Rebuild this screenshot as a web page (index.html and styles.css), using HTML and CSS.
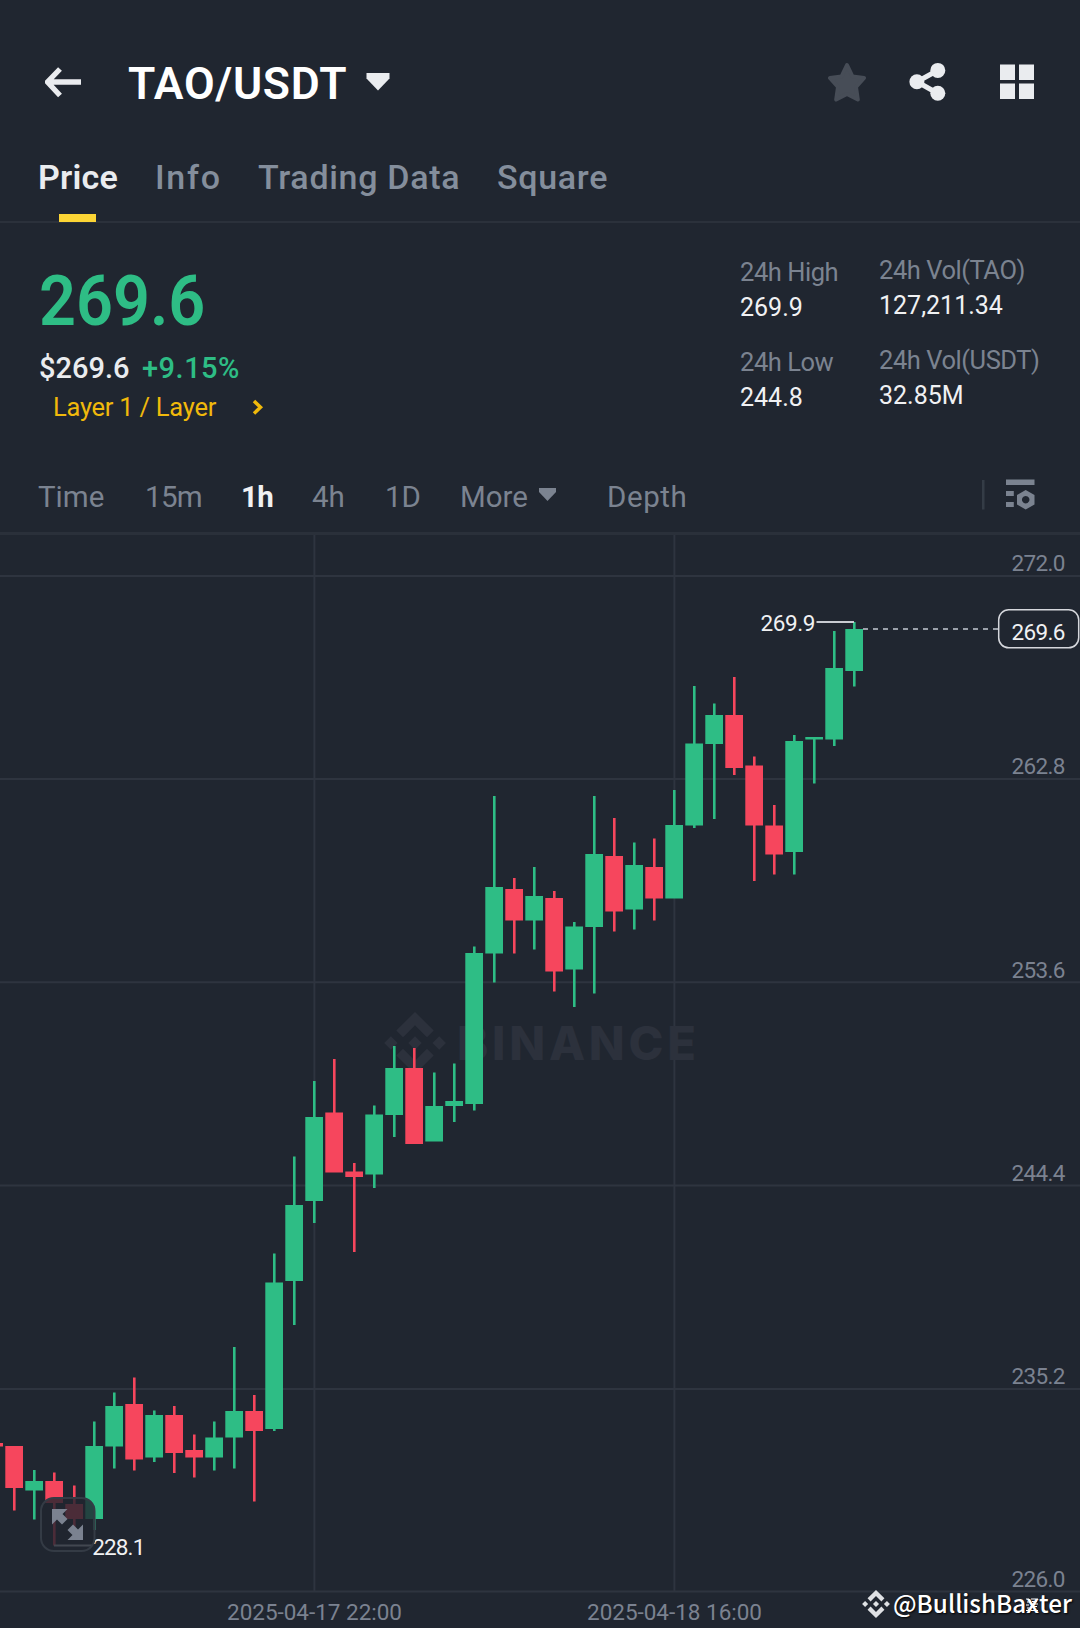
FILE: index.html
```html
<!DOCTYPE html>
<html lang="en">
<head>
<meta charset="utf-8">
<title>TAO/USDT</title>
<link rel="stylesheet" href="styles.css">
</head>
<body>
<header class="header">
  <svg class="back" width="36" height="60" viewBox="45 54 36 60"><path d="M81 82H48M60 69L47.500 82L60 95.500"/></svg>
  <h1 class="pair">TAO/USDT</h1>
  <svg class="caret" width="24" height="60" viewBox="366 54 24 60"><path d="M366.500 73H389.500V78.500L378 90.500L366.500 78.500Z"/></svg>
  <div class="actions">
    <svg class="star" width="38" height="60" viewBox="828.500 54 38 60"><path d="M847.500 65L853 76.500L864.500 78L856.500 87L858.300 99.500L847.500 94L836.700 99.500L838.500 87L830.500 78L842 76.500Z"/></svg>
    <svg class="share" width="37" height="60" viewBox="909.500 54 37 60"><path d="M938 70.500L917.500 81.800L938 93.300"/><circle cx="938.300" cy="70.400" r="7.500"/><circle cx="917.400" cy="81.800" r="7.500"/><circle cx="938.300" cy="93.300" r="7.500"/></svg>
    <svg class="grid" width="34" height="60" viewBox="1000 54 34 60"><path d="M1000 64.500h15v15.500h-15zM1019 64.500h15v15.500h-15zM1000 83.500h15v15.500h-15zM1019 83.500h15v15.500h-15z"/></svg>
  </div>
</header>
<nav class="tabs">
  <a class="tab tab-active">Price</a>
  <a class="tab tab-info">Info</a>
  <a class="tab">Trading Data</a>
  <a class="tab">Square</a>
</nav>
<section class="summary">
  <div class="quote">
    <div class="price">269.6</div>
    <div class="change"><span class="usd">$269.6</span><span class="pct">+9.15%</span></div>
    <div class="category"><span class="cat-name">Layer 1 / Layer</span><svg width="12" height="32" viewBox="253 391 12 32"><path d="M255 401L261.500 407.300L255 413.500"/></svg></div>
  </div>
  <dl class="stats">
    <dt>24h High</dt><dd>269.9</dd>
    <dt>24h Low</dt><dd>244.8</dd>
  </dl>
  <dl class="stats stats-vol">
    <dt>24h Vol(TAO)</dt><dd>127,211.34</dd>
    <dt>24h Vol(USDT)</dt><dd>32.85M</dd>
  </dl>
</section>
<nav class="frames">
  <a>Time</a>
  <a class="tight">15m</a>
  <a class="frame-active">1h</a>
  <a>4h</a>
  <a>1D</a>
  <a class="more">More<svg width="17" height="14" viewBox="0 0 17 14"><path d="M0 0H17V4L8.500 13L0 4Z"/></svg></a>
  <a class="depth">Depth</a>
  <svg class="settings" width="53" height="40" viewBox="982 475 53 40"><path class="sep" d="M982 480h2.500v29.500h-2.500z"/><path fill-rule="evenodd" d="M1006 479.500h28.500v5.500h-28.500zM1006 491h7.800v5h-7.800zM1006 502h7.800v5h-7.800zM1025.700 490L1034.500 495V504.500L1025.700 509.500L1017 504.500V495ZM1025.700 496a3.700 3.700 0 1 0 .01 0z"/></svg>
</nav>
<main class="chart">
  <svg width="1080" height="1093" viewBox="0 535 1080 1093">
    <g class="gridlines"><path d="M0 576H1080M0 779H1080M0 982.300H1080M0 1185.500H1080M0 1389H1080M0 1591.500H1080M314.400 535V1591M674.400 535V1591"/></g>
    <g class="brand">
      <path d="M396.300 1030.500L415 1012L433.700 1030.500L427 1037.200L415 1025.300L403 1037.200ZM396.300 1055.500L403 1048.800L415 1060.700L427 1048.800L433.700 1055.500L415 1074ZM384.200 1043l6.700-6.700 6.700 6.700-6.700 6.700zM408.300 1043l6.700-6.700 6.700 6.700-6.700 6.700zM432.500 1043l6.700-6.700 6.700 6.700-6.700 6.700z"/>
      <text x="457" y="1060" textLength="239">BINANCE</text>
    </g>
    <g id="candles"></g>
    <g class="scale">
      <text x="1011.500" y="571" textLength="54">272.0</text>
      <text x="1011.500" y="774" textLength="54">262.8</text>
      <text x="1011.500" y="977.500" textLength="54">253.6</text>
      <text x="1011.500" y="1181" textLength="54">244.4</text>
      <text x="1011.500" y="1384" textLength="54">235.2</text>
      <text x="1011.500" y="1586.500" textLength="54">226.0</text>
      <text x="227" y="1620" textLength="175">2025-04-17 22:00</text>
      <text x="587" y="1620" textLength="175">2025-04-18 16:00</text>
    </g>
    <path class="callout" d="M816.500 622H854M54 1545.500H92"/>
    <path class="last-line" d="M863 629H998"/>
    <rect class="tag" x="998.700" y="609.800" width="80" height="38" rx="10"/>
    <g class="values">
      <text x="760.500" y="631" textLength="55">269.9</text>
      <text x="1011.500" y="640" textLength="54">269.6</text>
      <text x="92.300" y="1555" textLength="53">228.1</text>
    </g>
    <g class="expand">
      <rect x="41" y="1498" width="53.500" height="53" rx="13"/>
      <path d="M52 1509H67.500L62.500 1514L67.500 1519L62 1524.500L57 1519.500L52 1524.500ZM83 1540H67.500L72.500 1535L67.500 1530L73 1524.500L78 1529.500L83 1524.500Z"/>
    </g>
  </svg>
  <div class="credit">
    <svg width="28" height="28" viewBox="384 1012 62 62"><path d="M396.300 1030.500L415 1012L433.700 1030.500L427 1037.200L415 1025.300L403 1037.200ZM396.300 1055.500L403 1048.800L415 1060.700L427 1048.800L433.700 1055.500L415 1074ZM384.200 1043l6.700-6.700 6.700 6.700-6.700 6.700zM408.300 1043l6.700-6.700 6.700 6.700-6.700 6.700zM432.500 1043l6.700-6.700 6.700 6.700-6.700 6.700z"/></svg>
    <span class="credit-name">@BullishBa<span class="credit-x">x<svg width="12" height="13" viewBox="0 0 12 13"><path d="M0 1H3M1 4H4M0 7H3M1 10H3M0 12.500H4M5 1H12M6 3.500H11M5 6H12M6 8.500H11M5 12.500H12M2 12L10 2"/></svg></span>ter</span>
  </div>
</main>
<script src="chart.js"></script>
</body>
</html>
```
FILE: styles.css
```css
* { box-sizing: border-box; }
body {
  margin: 0;
  width: 1080px;
  height: 1628px;
  overflow: hidden;
  background: #202630;
  color: #eaecef;
  font-family: Roboto, "Liberation Sans", sans-serif;
}
svg { display: block; flex: none; }
a { white-space: nowrap; }

.header { display: flex; height: 114px; padding: 54px 46px 0 45px; }
.back path { fill: none; stroke: #eaecef; stroke-width: 5.3; }
.pair { margin: 0 0 0 47px; width: 238px; font-size: 44.500px; line-height: 60px; font-weight: 600; color: #fff; letter-spacing: 0.700px; white-space: nowrap; }
.caret path, .grid path { fill: #eaecef; }
.actions { display: flex; margin-left: auto; }
.star path { fill: #474d57; stroke: #474d57; stroke-width: 4; stroke-linejoin: round; }
.share { margin-left: 43px; }
.share path { fill: none; stroke: #eaecef; stroke-width: 5; }
.share circle { fill: #eaecef; }
.grid { margin-left: 54px; }

.tabs {
  display: grid;
  grid-template-columns: 117px 103px 239px 200px;
  height: 109px;
  padding: 43px 0 0 38px;
  border-bottom: 2px solid #2b313b;
  font-size: 34px;
  line-height: 40px;
  font-weight: 500;
  letter-spacing: 0.700px;
  color: #848e9c;
}
.tab { position: relative; }
.tab-info { letter-spacing: 1.700px; }
.tab-active { color: #eaecef; font-weight: 600; letter-spacing: 0.200px; }
.tab-active::after { content: ""; position: absolute; left: 21px; top: 57px; width: 37px; height: 8px; background: #fcd535; }

.summary { display: flex; height: 247px; padding: 32px 0 0 39px; }
.quote { width: 701px; padding-top: 11px; }
.price { font-size: 70px; line-height: 70px; font-weight: 600; color: #2ebd85; transform: scaleX(0.925); transform-origin: 0 50%; }
.change { display: flex; margin-top: 14px; font-size: 29px; line-height: 36px; font-weight: 500; }
.usd { width: 103px; }
.pct { color: #2ebd85; letter-spacing: 0.500px; }
.category { display: flex; margin-top: 5px; padding-left: 14px; font-size: 25.500px; line-height: 32px; letter-spacing: -0.250px; color: #f0b90b; }
.cat-name { width: 199px; }
.category path { fill: none; stroke: #f0b90b; stroke-width: 3.500; }
.stats { margin: 0; width: 139px; white-space: nowrap; }
.stats-vol { margin-top: -2px; width: 200px; }
.stats dt { font-size: 25.500px; line-height: 34px; letter-spacing: -0.450px; color: #7b8390; }
.stats dd { margin: 2px 0 20px; font-size: 25px; line-height: 34px; color: #f0f1f3; }

.frames {
  display: grid;
  grid-template-columns: 107px 96px 71px 73px 75px 146px 376px 53px;
  height: 65px;
  padding: 7px 0 0 38px;
  border-bottom: 3px solid #2a303a;
  font-size: 29.500px;
  line-height: 40px;
  color: #7b8390;
}
.tight { letter-spacing: -0.700px; }
.frame-active { color: #f0f1f3; font-weight: 700; letter-spacing: -0.700px; }
.more { display: flex; gap: 11px; }
.depth { padding-left: 1px; letter-spacing: 0.600px; }
.more svg { margin-top: 11px; }
.more path, .settings path { fill: #7b8390; }
.settings { margin-top: -2px; }
.settings .sep { fill: #343c46; }

.chart { position: relative; height: 1093px; }
.gridlines path { fill: none; stroke: #2e343f; stroke-width: 2; }
.brand { fill: #2c313c; }
.brand text { font: 800 47px Inter, sans-serif; }
.up { fill: #2ebd85; }
.down { fill: #f6465d; }
.scale { font-size: 22.500px; fill: #7b8290; }
.values { font-size: 22.500px; fill: #f0f1f3; }
.callout { fill: none; stroke: #c9ccd2; stroke-width: 2; }
.last-line { fill: none; stroke: #9ba1aa; stroke-width: 2; stroke-dasharray: 5 5; }
.tag { fill: #202630; stroke: #d5d7dc; stroke-width: 1.500; }
.expand rect { fill: rgba(32, 38, 48, 0.8); stroke: #343b45; stroke-width: 2; }
.expand path { fill: #7b8290; }
.credit { position: absolute; left: 862px; top: 1051px; display: flex; align-items: center; height: 36px; color: #fff; }
.credit > svg path { fill: #dfe1e4; }
.credit-name { margin: -2px 0 0 3px; font: 500 24.300px/34px "Noto Sans CJK SC", "Noto Sans", sans-serif; text-shadow: 1px 1px 2px #000; white-space: nowrap; }
.credit-x { position: relative; }
.credit-x svg { position: absolute; left: 0; top: 13px; }
.credit-x path { fill: none; stroke: #fff; stroke-width: 1; }
```
FILE: chart.js
```js
// Each candle: [direction, high, body top, body bottom, low], in chart pixels, 20px apart.
const candles = [
  ["down", 1443, 1443, 1446.5, 1446.5],
  ["down", 1446, 1446, 1488, 1510.5],
  ["up", 1470, 1481, 1490.5, 1519.5],
  ["down", 1472.5, 1481, 1503, 1545.5],
  ["down", 1485.5, 1504, 1519, 1530],
  ["up", 1421.5, 1446, 1519, 1530],
  ["up", 1392.5, 1406, 1446.5, 1468.5],
  ["down", 1377.5, 1404, 1459.5, 1470.5],
  ["up", 1410.5, 1415, 1457.5, 1462],
  ["down", 1406, 1415, 1453, 1473],
  ["down", 1434.5, 1450, 1457.5, 1477.5],
  ["up", 1421.5, 1437.5, 1457.5, 1470.5],
  ["up", 1347, 1411, 1437.5, 1468.5],
  ["down", 1395, 1411, 1431, 1501.5],
  ["up", 1253.5, 1282.5, 1429, 1431],
  ["up", 1156.5, 1205, 1281, 1325],
  ["up", 1081, 1117, 1201, 1223],
  ["down", 1059, 1112.5, 1172.5, 1172.5],
  ["down", 1163, 1171.5, 1177, 1252],
  ["up", 1105.5, 1114.5, 1174.5, 1188],
  ["up", 1046, 1068, 1115, 1137],
  ["down", 1048, 1068, 1144, 1144],
  ["up", 1072.5, 1106, 1141.5, 1141.5],
  ["up", 1063.5, 1101, 1106, 1122],
  ["up", 946.5, 953, 1104, 1110.5],
  ["up", 796, 887, 953.5, 982.5],
  ["down", 878, 889, 920.5, 953.5],
  ["up", 867, 896, 920.5, 949.5],
  ["down", 891, 898, 971.5, 991.5],
  ["up", 922, 926.5, 969.5, 1007],
  ["up", 796, 854, 927, 993.5],
  ["down", 818, 856, 911.5, 931.5],
  ["up", 842.5, 865, 909.5, 929.5],
  ["down", 838.5, 867, 898.5, 920.5],
  ["up", 790, 825, 898.5, 898.5],
  ["up", 686, 743.5, 825.5, 828],
  ["up", 703.5, 715, 744, 819],
  ["down", 677, 715, 768, 775],
  ["down", 756.5, 765.5, 825.5, 881],
  ["down", 805, 825.5, 854.5, 874.5],
  ["up", 735, 741, 852, 874.5],
  ["up", 737, 737, 739.5, 783.5],
  ["up", 631, 668, 739.5, 746],
  ["up", 622, 629, 671, 686.5]
];
const layer = document.getElementById("candles");
candles.forEach(([dir, high, top, bottom, low], i) => {
  const x = -5.7 + i * 20;
  const path = document.createElementNS("http://www.w3.org/2000/svg", "path");
  path.setAttribute("class", dir);
  path.setAttribute("d", `M${x - 9} ${top}h17.7V${bottom}h-17.7zM${x - 1.3} ${high}h2.6V${low}h-2.6z`);
  layer.appendChild(path);
});
```
